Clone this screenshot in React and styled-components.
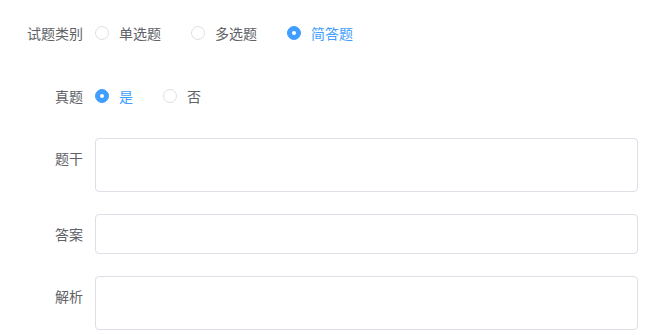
import React, { useState } from "react";
import styled, { createGlobalStyle } from "styled-components";

const Global = createGlobalStyle`
  body {
    margin: 0;
    background: #fff;
    font-family: "Noto Sans CJK SC", "Liberation Sans", sans-serif;
  }
`;

const Form = styled.form`
  width: 638px;
  padding-top: 13px;
`;

const Item = styled.div`
  display: flex;
  align-items: flex-start;
  margin-bottom: 22px;
  &:first-child {
    margin-bottom: 23px;
  }
  &:last-child {
    margin-bottom: 0;
  }
`;

const Label = styled.label`
  width: 83px;
  padding-right: 12px;
  flex: none;
  text-align: right;
  font-size: 14px;
  line-height: 40px;
  color: #606266;
`;

const Content = styled.div`
  flex: 1;
  min-height: 40px;
  display: flex;
  align-items: center;
`;

const Radio = styled.label`
  display: inline-flex;
  align-items: center;
  margin-right: 30px;
  font-size: 14px;
  color: ${(p) => (p.checked ? "#409eff" : "#606266")};
  cursor: pointer;
`;

const Dot = styled.span`
  box-sizing: border-box;
  width: 14px;
  height: 14px;
  border-radius: 50%;
  border: 1px solid ${(p) => (p.checked ? "#409eff" : "#dcdfe6")};
  background: ${(p) => (p.checked ? "#409eff" : "#fff")};
  margin-right: 10px;
  display: flex;
  align-items: center;
  justify-content: center;
  &::after {
    content: "";
    width: 4px;
    height: 4px;
    border-radius: 50%;
    background: #fff;
    display: ${(p) => (p.checked ? "block" : "none")};
  }
`;

const TextArea = styled.textarea`
  box-sizing: border-box;
  width: 100%;
  height: 54px;
  display: block;
  resize: none;
  border: 1px solid #dcdfe6;
  border-radius: 4px;
  padding: 5px 15px;
  font: inherit;
  font-size: 14px;
  color: #606266;
  outline: none;
`;

const Input = styled.input`
  box-sizing: border-box;
  width: 100%;
  height: 40px;
  border: 1px solid #dcdfe6;
  border-radius: 4px;
  padding: 0 15px;
  font: inherit;
  font-size: 14px;
  color: #606266;
  outline: none;
`;

function RadioGroup({ options, value, onChange }) {
  return (
    <>
      {options.map((o) => (
        <Radio key={o} checked={value === o} onClick={() => onChange(o)}>
          <Dot checked={value === o} />
          {o}
        </Radio>
      ))}
    </>
  );
}

export default function App() {
  const [type, setType] = useState("简答题");
  const [real, setReal] = useState("是");

  return (
    <>
      <Global />
      <Form>
        <Item>
          <Label>试题类别</Label>
          <Content>
            <RadioGroup
              options={["单选题", "多选题", "简答题"]}
              value={type}
              onChange={setType}
            />
          </Content>
        </Item>
        <Item>
          <Label>真题</Label>
          <Content>
            <RadioGroup options={["是", "否"]} value={real} onChange={setReal} />
          </Content>
        </Item>
        <Item>
          <Label>题干</Label>
          <Content>
            <TextArea />
          </Content>
        </Item>
        <Item>
          <Label>答案</Label>
          <Content>
            <Input />
          </Content>
        </Item>
        <Item>
          <Label>解析</Label>
          <Content>
            <TextArea />
          </Content>
        </Item>
      </Form>
    </>
  );
}
